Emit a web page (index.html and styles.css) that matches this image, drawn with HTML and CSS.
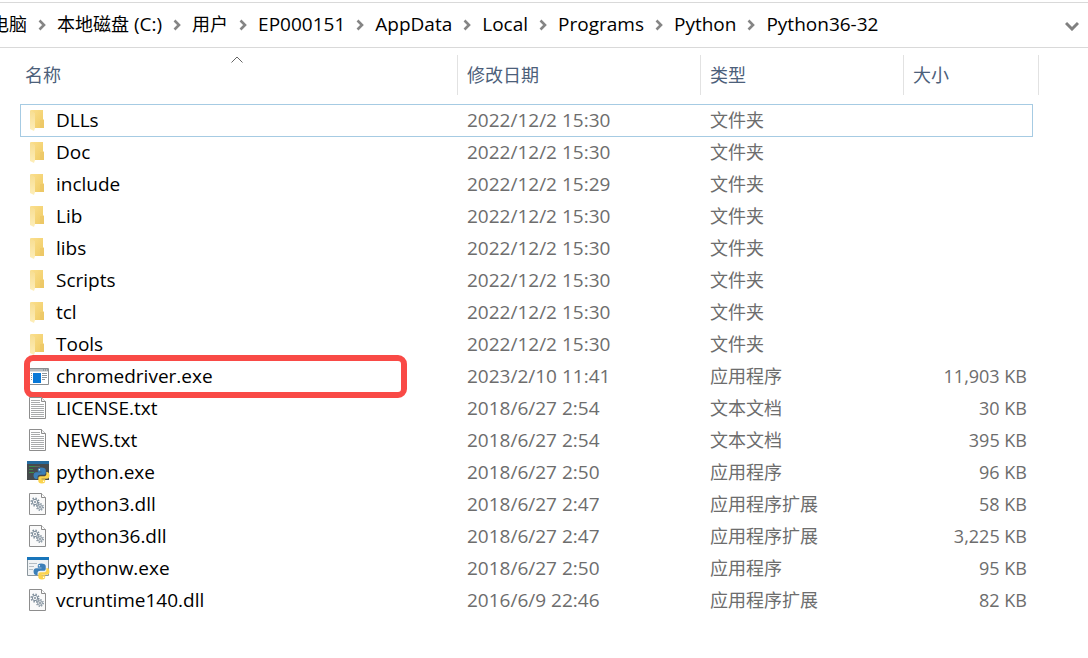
FILE: index.html
```html
<!DOCTYPE html>
<html lang="zh-CN">
<head>
<meta charset="utf-8">
<title>Python36-32</title>
<link rel="stylesheet" href="styles.css">
</head>
<body>
<svg class="sprite" aria-hidden="true">
  <defs>
    <linearGradient id="gold" x1="0" x2="1" y1="0" y2="1"><stop offset="0" stop-color="#fbdf8d"/><stop offset="1" stop-color="#efca62"/></linearGradient>
    <linearGradient id="flap" x1="0" x2="0" y1="0" y2="1"><stop offset="0" stop-color="#f7dd90"/><stop offset="1" stop-color="#fdeeba"/></linearGradient>
  </defs>
  <symbol id="folder" viewBox="0 0 24 24">
    <path d="M5 2h12v9l1 1v8H5z" fill="url(#gold)"/>
    <path d="M14 12h4v8h-4z" fill="#eac466" opacity=".5"/>
    <path d="M4 2l5 3v15l-1 3-4-2z" fill="url(#flap)"/>
  </symbol>
  <symbol id="app" viewBox="0 0 24 24">
    <path d="M3.500 4.500h19v16h-19z" fill="#fff" stroke="#8b8f92"/>
    <path d="M4 5h18v2.500H4z" fill="#b5babd"/>
    <path d="M17 6h1m1 0h1m1 0h1" stroke="#737a7e"/>
    <path d="M7 9h8v10H7z" fill="#0878d7"/>
    <path d="M5 9.500h1m-1 2h1m-1 2h1m-1 2h1M16 9.500h5m-5 2h5m-5 2h5m-5 2h3" stroke="#8e979d"/>
  </symbol>
  <symbol id="text" viewBox="0 0 24 24">
    <path d="M3.500 1.500h12l4 4v17h-16z" fill="#fff" stroke="#8d8d8d"/>
    <path d="M15.500 1.500v4h4" fill="#f4f4f4" stroke="#8d8d8d"/>
    <path d="M5 4.500h9M5 6.500h9M5 8.500h13M5 10.500h13M5 12.500h13M5 14.500h13M5 16.500h13M5 18.500h13M5 20.500h13" stroke="#a9abac"/>
  </symbol>
  <symbol id="dll" viewBox="0 0 24 24">
    <path d="M3.500 1.500h12l4 4v17h-16z" fill="#fafafa" stroke="#8d8d8d"/>
    <path d="M15.500 1.500v4h4" fill="#fff" stroke="#8d8d8d"/>
    <g fill="none" stroke="#81909d">
      <circle cx="9" cy="10" r="2.700"/><circle cx="9" cy="10" r=".8"/>
      <circle cx="9" cy="10" r="3.800" stroke-width="1.500" stroke-dasharray="1.500 1.480"/>
      <circle cx="14" cy="15" r="2.300"/><circle cx="14" cy="15" r=".7"/>
      <circle cx="14" cy="15" r="3.300" stroke-width="1.300" stroke-dasharray="1.300 1.290"/>
    </g>
  </symbol>
  <symbol id="snake" viewBox="0 0 16 16">
    <path d="M7.700.5C5 .5 4.500 1.500 4.500 3v1.500H8V5H3C1.200 5 .5 6.300.5 8S1.300 11.300 3 11.300h1.300V9.500C4.300 8 5.500 7.300 7 7.300h3c1.300 0 2-.8 2-2V3C12 1.300 10.500.5 7.700.5z" fill="#3c7fb8"/>
    <path d="M8.300 15.500c2.700 0 3.200-1 3.200-2.500v-1.500H8V11h5c1.800 0 2.500-1.300 2.500-3S14.700 4.700 13 4.700h-.4v1.800c0 1.500-1.100 2.200-2.600 2.200H7c-1.300 0-2 .8-2 2V13c0 1.700 1 2.500 3.300 2.500z" fill="#fbd34d"/>
    <circle cx="6" cy="2.500" r=".7" fill="#fff"/><circle cx="10" cy="13.500" r=".7" fill="#fff"/>
  </symbol>
  <symbol id="python" viewBox="0 0 24 24">
    <path d="M1 1h22v19H1z" fill="#464a4c"/>
    <path d="M1 1h22v3H1z" fill="#256b9e"/>
    <path d="M3 6.500h6M3 9.500h4M3 12.500h5" stroke="#3d8c4a"/>
    <path d="M9 6.500h5" stroke="#5d6a5d"/>
    <use href="#snake" x="7" y="7" width="17" height="17"/>
  </symbol>
  <symbol id="pythonw" viewBox="0 0 24 24">
    <path d="M1.500 2.500h21v17h-21z" fill="#f0f3f5" stroke="#8b969d"/>
    <path d="M1 1h22v3H1z" fill="#1875ba"/>
    <path d="M3 7.500h8M3 10.500h5M3 13.500h4" stroke="#b4bdc4"/>
    <use href="#snake" x="7" y="7" width="17" height="17"/>
  </symbol>
  <symbol id="chevron" viewBox="0 0 8 12"><path d="M1.500 1.500L6 6l-4.500 4.500" fill="none" stroke="#858585" stroke-width="2.600"/></symbol>
</svg>

<nav class="address" aria-label="路径">
  <ol class="crumbs">
    <li><a class="han" href="#">此电脑</a></li>
    <li><svg class="chevron"><use href="#chevron"/></svg><a href="#"><span class="han">本地磁盘</span> (C:)</a></li>
    <li><svg class="chevron"><use href="#chevron"/></svg><a class="han" href="#">用户</a></li>
    <li><svg class="chevron"><use href="#chevron"/></svg><a href="#">EP000151</a></li>
    <li><svg class="chevron"><use href="#chevron"/></svg><a href="#">AppData</a></li>
    <li><svg class="chevron"><use href="#chevron"/></svg><a href="#">Local</a></li>
    <li><svg class="chevron"><use href="#chevron"/></svg><a href="#">Programs</a></li>
    <li><svg class="chevron"><use href="#chevron"/></svg><a href="#">Python</a></li>
    <li><svg class="chevron"><use href="#chevron"/></svg><a href="#">Python36-32</a></li>
  </ol>
  <button class="history" aria-label="以前的位置"><svg width="14" height="10" viewBox="0 0 14 10"><path d="M1 2l6 6 6-6" fill="none" stroke="#808080" stroke-width="3"/></svg></button>
</nav>

<main class="files">
<table>
  <colgroup><col><col class="col-date"><col class="col-type"><col class="col-size"><col class="col-tail"></colgroup>
  <thead>
    <tr>
      <th aria-sort="ascending">名称<svg class="sort" width="12" height="7" viewBox="0 0 12 7"><path d="M.5 6.500L6 1l5.500 5.500" fill="none" stroke="#666"/></svg></th>
      <th>修改日期</th><th>类型</th><th colspan="2">大小</th>
    </tr>
  </thead>
  <tbody>
    <tr class="focused"><td><span class="name"><svg class="icon"><use href="#folder"/></svg>DLLs</span></td><td>2022/12/2 15:30</td><td>文件夹</td><td></td></tr>
    <tr><td><span class="name"><svg class="icon"><use href="#folder"/></svg>Doc</span></td><td>2022/12/2 15:30</td><td>文件夹</td><td></td></tr>
    <tr><td><span class="name"><svg class="icon"><use href="#folder"/></svg>include</span></td><td>2022/12/2 15:29</td><td>文件夹</td><td></td></tr>
    <tr><td><span class="name"><svg class="icon"><use href="#folder"/></svg>Lib</span></td><td>2022/12/2 15:30</td><td>文件夹</td><td></td></tr>
    <tr><td><span class="name"><svg class="icon"><use href="#folder"/></svg>libs</span></td><td>2022/12/2 15:30</td><td>文件夹</td><td></td></tr>
    <tr><td><span class="name"><svg class="icon"><use href="#folder"/></svg>Scripts</span></td><td>2022/12/2 15:30</td><td>文件夹</td><td></td></tr>
    <tr><td><span class="name"><svg class="icon"><use href="#folder"/></svg>tcl</span></td><td>2022/12/2 15:30</td><td>文件夹</td><td></td></tr>
    <tr><td><span class="name"><svg class="icon"><use href="#folder"/></svg>Tools</span></td><td>2022/12/2 15:30</td><td>文件夹</td><td></td></tr>
    <tr class="marked"><td><span class="name"><svg class="icon"><use href="#app"/></svg>chromedriver.exe</span></td><td>2023/2/10 11:41</td><td>应用程序</td><td>11,903 KB</td></tr>
    <tr><td><span class="name"><svg class="icon"><use href="#text"/></svg>LICENSE.txt</span></td><td>2018/6/27 2:54</td><td>文本文档</td><td>30 KB</td></tr>
    <tr><td><span class="name"><svg class="icon"><use href="#text"/></svg>NEWS.txt</span></td><td>2018/6/27 2:54</td><td>文本文档</td><td>395 KB</td></tr>
    <tr><td><span class="name"><svg class="icon"><use href="#python"/></svg>python.exe</span></td><td>2018/6/27 2:50</td><td>应用程序</td><td>96 KB</td></tr>
    <tr><td><span class="name"><svg class="icon"><use href="#dll"/></svg>python3.dll</span></td><td>2018/6/27 2:47</td><td>应用程序扩展</td><td>58 KB</td></tr>
    <tr><td><span class="name"><svg class="icon"><use href="#dll"/></svg>python36.dll</span></td><td>2018/6/27 2:47</td><td>应用程序扩展</td><td>3,225 KB</td></tr>
    <tr><td><span class="name"><svg class="icon"><use href="#pythonw"/></svg>pythonw.exe</span></td><td>2018/6/27 2:50</td><td>应用程序</td><td>95 KB</td></tr>
    <tr><td><span class="name"><svg class="icon"><use href="#dll"/></svg>vcruntime140.dll</span></td><td>2016/6/9 22:46</td><td>应用程序扩展</td><td>82 KB</td></tr>
  </tbody>
</table>
</main>
</body>
</html>
```
FILE: styles.css
```css
* { box-sizing: border-box; }
body {
  margin: 0;
  background: #fff;
  color: #000;
  font: 19px/32px "Open Sans", "Noto Sans CJK SC", sans-serif;
}
.sprite { position: absolute; width: 0; height: 0; }

.address {
  display: flex;
  align-items: center;
  height: 46px;
  margin-top: 2px;
  padding: 0 9px 2px 0;
  border-top: 1px solid #d9d9d9;
  border-bottom: 1px solid #d9d9d9;
  overflow: hidden;
}
.crumbs {
  display: flex;
  flex: 1;
  margin: 0 0 0 -27px;
  padding: 0;
  list-style: none;
  white-space: nowrap;
}
.crumbs li { display: flex; align-items: center; }
.crumbs a { color: inherit; text-decoration: none; }
.han { font-size: 18px; }
.chevron { width: 8px; height: 12px; margin: 2px 11px 0 11px; }
.history {
  display: flex;
  padding: 4px 0 0;
  border: 0;
  background: none;
}

.files { padding: 7px 49px 0 20px; }
table {
  width: 100%;
  table-layout: fixed;
  border-collapse: separate;
  border-spacing: 0;
}
.col-date { width: 243px; }
.col-type { width: 203px; }
.col-size { width: 129px; }
.col-tail { width: 6px; }

th {
  position: relative;
  height: 40px;
  padding: 0 9px;
  border-right: 1px solid #e2e2e2;
  color: #4c607a;
  font-size: 18px;
  font-weight: 400;
  text-align: left;
}
th:first-child { padding-left: 5px; }
.sort { position: absolute; top: 1px; left: calc(50% - 8px); }

thead::after { content: ""; display: block; height: 9px; }
td {
  height: 32px;
  padding: 0 9px;
  color: #6d6d6d;
  white-space: nowrap;
}
td:first-child { position: relative; padding-left: 6px; color: #000; }
td:nth-child(3) { font-size: 18px; }
td:nth-child(4) { padding: 0 6px 0 0; font-size: 18px; text-align: right; }
.name { display: flex; align-items: center; gap: 6px; }
.icon { width: 24px; height: 24px; }

.focused td { box-shadow: inset 0 1px #a6cbe3, 0 1px #a6cbe3; }
.focused td:first-child { box-shadow: inset 1px 1px #a6cbe3, 0 1px #a6cbe3; }
.focused td:last-child { box-shadow: inset -1px 1px #a6cbe3, 0 1px #a6cbe3; }

.marked td:first-child::after {
  content: "";
  position: absolute;
  inset: -5px 51px -6px 4px;
  border: 6px solid #f94a46;
  border-radius: 9px;
}
```
